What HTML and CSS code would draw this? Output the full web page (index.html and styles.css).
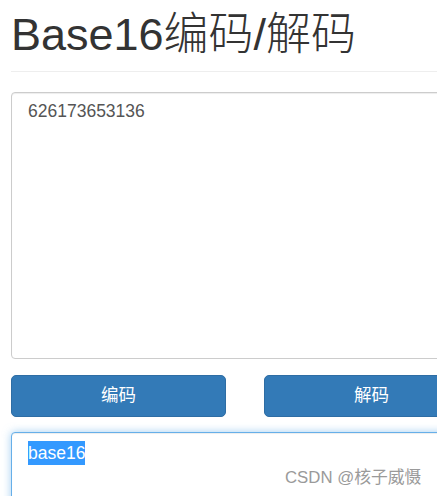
FILE: index.html
```html
<!DOCTYPE html>
<html lang="zh-CN">
<head>
<meta charset="utf-8">
<title>Base16编码/解码</title>
<link rel="stylesheet" href="styles.css">
</head>
<body>
<div class="page">
  <h1 class="title">Base16编码/解码</h1>
  <div class="box input">626173653136</div>
  <div class="actions">
    <button class="btn">编码</button>
    <button class="btn btn-second">解码</button>
  </div>
  <div class="box output focus"><span class="sel">base16</span></div>
</div>
<div class="watermark">CSDN @核子威慑</div>
</body>
</html>
```

FILE: styles.css
```css
html, body {
  margin: 0;
  padding: 0;
  overflow: hidden;
  background: #fff;
}
body {
  font-family: "Liberation Sans", "Noto Sans CJK SC", sans-serif;
  color: #333;
  font-size: 17.5px;
  width: 437px;
  height: 496px;
  position: relative;
}
.page {
  padding-left: 11px;
  width: 480px;
}
.title {
  margin: 0;
  padding-top: 10px;
  padding-bottom: 11px;
  font-size: 45px;
  line-height: 49.5px;
  font-weight: 300;
  color: #333;
  border-bottom: 1px solid #eee;
}
.box {
  box-sizing: border-box;
  border: 1px solid #ccc;
  border-radius: 4px;
  box-shadow: inset 0 1px 1px rgba(0,0,0,.075);
  padding: 6px 16px;
  font-size: 17.5px;
  line-height: 25px;
  color: #555;
  background: #fff;
}
.input {
  margin-top: 20px;
  height: 267px;
}
.actions {
  display: flex;
  margin-top: 16px;
}
.btn {
  box-sizing: border-box;
  width: 215px;
  height: 42px;
  background: #337ab7;
  border: 1px solid #2e6da4;
  border-radius: 5px;
  color: #fff;
  font-family: "Liberation Sans", "Noto Sans CJK SC", sans-serif;
  font-size: 17.5px;
  padding: 0 0 4px;
}
.btn-second {
  margin-left: 38px;
}
.output {
  margin-top: 15px;
  height: 120px;
  padding-top: 8px;
}
.focus {
  border-color: #66afe9;
  box-shadow: inset 0 1px 1px rgba(0,0,0,.075), 0 0 8px rgba(102,175,233,.6);
}
.sel {
  display: inline-block;
  background: #3399ff;
  color: #fff;
  line-height: 24px;
}
.watermark {
  position: absolute;
  left: 285px;
  top: 468px;
  font-size: 16.8px;
  line-height: 20px;
  color: #9a9a9a;
  white-space: nowrap;
}
```
